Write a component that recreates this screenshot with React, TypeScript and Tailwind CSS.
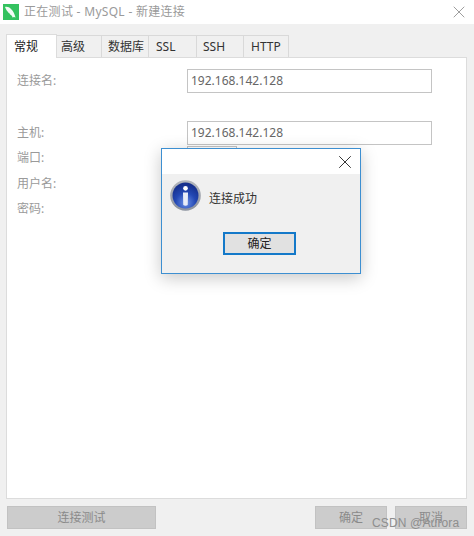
import React from 'react';
import { X } from 'lucide-react';

const font = { fontFamily: '"Noto Sans", "Noto Sans CJK SC", sans-serif' };

const tabs = [
    { label: '高级', width: 'w-[45px]', pad: 'pl-[4px]' },
    { label: '数据库', width: 'w-[47px]', pad: 'pl-[6px]' },
    { label: 'SSL', width: 'w-[48px]', pad: 'pl-[7px]' },
    { label: 'SSH', width: 'w-[47px]', pad: 'pl-[6px]' },
    { label: 'HTTP', width: 'w-[45px]', pad: 'pl-[7px]' },
];

const NavicatLogo = () => (
    <svg width="16" height="16" viewBox="0 0 16 16">
        <rect x="0" y="0" width="16" height="16" fill="#34c25f" />
        <path d="M2 3 C4.5 2.5 6.5 3.5 8 5 C10.5 7.2 11.5 9.8 12.5 13.5 C11.5 12.8 10.5 12.8 9.5 13.5 C9.3 12 8.5 11 7 10.5 C7 9.8 6.5 9.3 5.5 8.8 C5 7.5 3.8 6.8 3.2 5.4 C2.8 4.5 2.3 3.8 2 3 Z" fill="#f2fbf4" />
    </svg>
);

const InfoIcon = () => (
    <svg width="31" height="31" viewBox="0 0 32 32">
        <defs>
            <radialGradient id="ball" cx="50%" cy="78%" r="70%">
                <stop offset="0%" stopColor="#6a90e6" />
                <stop offset="55%" stopColor="#2348b4" />
                <stop offset="100%" stopColor="#16308e" />
            </radialGradient>
            <linearGradient id="ring" x1="0" y1="0" x2="0" y2="1">
                <stop offset="0%" stopColor="#b4b7bd" />
                <stop offset="100%" stopColor="#8b929e" />
            </linearGradient>
        </defs>
        <circle cx="16" cy="16" r="15.8" fill="url(#ring)" />
        <circle cx="16" cy="16" r="13.4" fill="url(#ball)" />
        <circle cx="16" cy="8.6" r="2.4" fill="#ffffff" />
        <path d="M13.4 13 L18.6 13 L18.3 25.8 C17 26.8 15 26.8 13.7 25.8 Z" fill="#e8edf8" />
    </svg>
);

const App: React.FC = () => {
    return (
        <div className="relative w-[474px] h-[536px] overflow-hidden bg-[#f0f0f0] text-[12.5px] leading-none" style={font}>
            {/* Title bar */}
            <div className="h-6 bg-white flex items-center pl-[3px] pr-[5px]">
                <NavicatLogo />
                <span className="ml-[5px] text-[#9a9a9a] text-[12px] tracking-[0.3px]">正在测试 - MySQL - 新建连接</span>
                <X size={20} strokeWidth={1} className="ml-auto text-[#8a8a8a]" />
            </div>

            {/* Tabs */}
            <div className="flex items-end h-[33px] pl-[6px]">
                <div className="relative z-10 w-[51px] h-[24px] -mb-px bg-white border border-b-0 border-[#dcdcdc] flex items-center pl-[7px] text-[#222222] text-[12px]">常规</div>
                {tabs.map(tab => (
                    <div key={tab.label} className={`${tab.width} ${tab.pad} h-[22px] bg-[#f0f0f0] border border-l-0 border-b-0 border-[#d9d9d9] flex items-center text-[#333333] text-[12px]`}>
                        {tab.label}
                    </div>
                ))}
            </div>

            {/* Form panel */}
            <div className="ml-[6px] w-[461px] h-[442px] bg-white border border-[#dcdcdc] pl-[10px] text-[12px]">
                <div className="flex items-center h-6 mt-[11px]">
                    <span className="w-[170px] text-[#9a9a9a]">连接名:</span>
                    <div className="w-[245px] h-6 border border-[#c4c4c4] flex items-center pl-[3px] text-[#666666] text-[12px]">192.168.142.128</div>
                </div>
                <div className="flex items-center h-6 mt-[28px]">
                    <span className="w-[170px] text-[#9a9a9a]">主机:</span>
                    <div className="w-[245px] h-6 border border-[#c4c4c4] flex items-center pl-[3px] text-[#666666] text-[12px]">192.168.142.128</div>
                </div>
                <div className="flex items-center h-6 mt-[2px] -translate-y-px">
                    <span className="w-[170px] text-[#9a9a9a]">端口:</span>
                    <div className="w-[50px] h-6 border border-[#c4c4c4]" />
                </div>
                <div className="flex items-center h-6 mt-[1.5px] text-[#9a9a9a] -translate-y-px">用户名:</div>
                <div className="flex items-center h-6 mt-[1.5px] text-[#9a9a9a] -translate-y-px">密码:</div>
            </div>

            {/* Bottom buttons */}
            <div className="flex mt-[7px] pl-[7px] h-[23px] text-[#8a8a8a] text-[12px]">
                <div className="w-[149px] bg-[#cccccc] border border-[#c2c2c2] flex items-center justify-center">连接测试</div>
                <div className="w-[72px] ml-[159px] bg-[#cccccc] border border-[#c2c2c2] flex items-center justify-center">确定</div>
                <div className="w-[72px] ml-[8px] bg-[#cccccc] border border-[#c2c2c2] flex items-center justify-center">取消</div>
            </div>

            {/* Message box */}
            <div className="absolute left-[161px] top-[148px] w-[200px] h-[126px] bg-[#f0f0f0] border-[1.5px] border-[#3d8fd1] shadow-[0_4px_16px_rgba(0,0,0,0.22)] flex flex-col text-[12px]">
                <div className="h-[25px] bg-white flex items-center justify-end pr-[4px]">
                    <X size={22} strokeWidth={1} className="text-[#222222]" />
                </div>
                <div className="flex items-center mt-[6px] pl-[8px]">
                    <InfoIcon />
                    <span className="ml-[8px] mt-[6px] text-[#333333]">连接成功</span>
                </div>
                <div className="flex pl-[61px] mt-[21px]">
                    <div className="w-[73px] h-[23px] bg-[#e1e1e1] border-2 border-[#1479c9] flex items-center justify-center text-[#222222]">确定</div>
                </div>
            </div>

            {/* Watermark */}
            <div className="absolute left-[372px] top-[517px] text-[12px] tracking-[0.15px] text-[#8e8e8e]" style={{ fontFamily: '"Liberation Sans", sans-serif' }}>CSDN @Aurora</div>
        </div>
    );
};

export default App;
